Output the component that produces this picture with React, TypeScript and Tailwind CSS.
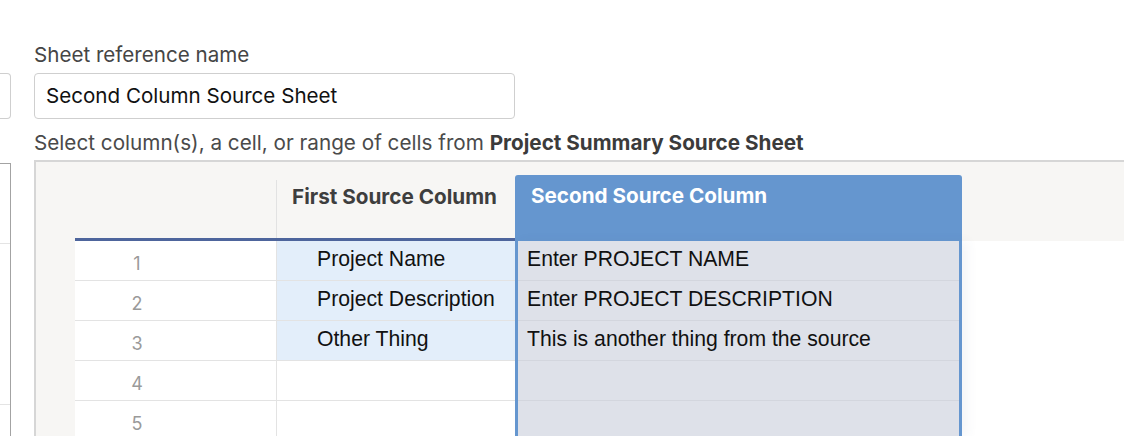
import React from 'react';

const rows = [
  { n: 1, label: 'Project Name', value: 'Enter PROJECT NAME' },
  { n: 2, label: 'Project Description', value: 'Enter PROJECT DESCRIPTION' },
  { n: 3, label: 'Other Thing', value: 'This is another thing from the source' },
  { n: 4, label: '', value: '' },
  { n: 5, label: '', value: '' },
];

const inter = "font-['Inter',sans-serif]";
const cellFont = "font-['Liberation_Sans',Arial,sans-serif]";

export default function App() {
  return (
    <div className="flex h-[436px] w-[1124px] overflow-hidden bg-white">
      {/* clipped panel on the left */}
      <div className="flex w-[11px] shrink-0 flex-col">
        <div className="mt-[73px] h-[46px] shrink-0 rounded-r-[4px] border-y border-r border-[#cfcfcf]" />
        <div className="mt-[44px] min-h-0 flex-1 border-t border-r border-[#a3a3a3]">
          <div className="h-[80px] border-b border-[#e4e4e4]" />
          <div className="h-[161px] border-b border-[#e4e4e4]" />
        </div>
      </div>

      <div className={`ml-[23px] flex min-w-0 flex-1 flex-col pt-[43px] ${inter}`}>
        <label className="shrink-0 text-[20.6px] leading-[24px] text-[#454545]">Sheet reference name</label>
        <div className="mt-[6px] flex h-[46px] w-[481px] shrink-0 items-center rounded-[4px] border border-[#cfcfcf] px-[11px] text-[20.6px] text-[#111]">
          Second Column Source Sheet
        </div>
        <p className="mt-[12px] shrink-0 text-[20.7px] leading-[24px] text-[#4a4a4a]">
          Select column(s), a cell, or range of cells from{' '}
          <span className="font-bold text-[#3b3b3b]">Project Summary Source Sheet</span>
        </p>

        <div className="mt-[5px] flex min-h-0 flex-1 border-t-2 border-l-2 border-[#d6d6d6] bg-[#f7f6f4]">
          {/* gutter */}
          <div className="w-[39px] shrink-0" />

          {/* row numbers */}
          <div className="flex w-[201px] shrink-0 flex-col">
            <div className="h-[79px] shrink-0 border-b-[3px] border-[#4e659c]" />
            {rows.map((r) => (
              <div
                key={r.n}
                className="flex h-[40px] shrink-0 items-center border-b border-[#e3e3e3] bg-white pt-[5px]"
              >
                <span className="w-[124px] text-center text-[18px] text-[#9a9a9a]">{r.n}</span>
              </div>
            ))}
          </div>

          {/* first source column */}
          <div className="flex w-[239px] shrink-0 flex-col">
            <div className="flex h-[79px] shrink-0 border-b-[3px] border-[#4e659c]">
              <div className="mt-[18px] flex-1 border-l border-[#e2e2e2] pl-[15px] pt-[1px]">
                <span className="text-[20.7px] font-bold text-[#3e3e3e]">First Source Column</span>
              </div>
            </div>
            {rows.map((r) => (
              <div
                key={r.n}
                className={`flex h-[40px] shrink-0 items-center border-b border-l border-[#e3e3e3] pb-[4px] pl-[40px] text-[21.2px] text-[#111] ${cellFont} ${
                  r.label ? 'bg-[#e3eefa]' : 'bg-white'
                }`}
              >
                {r.label}
              </div>
            ))}
          </div>

          {/* second source column (selected) */}
          <div className="relative z-10 flex w-[447px] shrink-0 flex-col">
            <div className="mt-[13px] h-[66px] shrink-0 rounded-t-[3px] bg-[#6596cf] pl-[16px] pt-[5px]">
              <span className="text-[20.7px] font-bold text-white">Second Source Column</span>
            </div>
            <div className="min-h-0 flex-1 border-x-[3px] border-[#6596cf] bg-[#dee1e9] shadow-[6px_0_10px_rgba(60,80,120,0.06)]">
              {rows.map((r) => (
                <div
                  key={r.n}
                  className={`flex h-[40px] items-center border-b border-[#d3d6de] pb-[4px] pl-[9px] text-[21.2px] text-[#111] ${cellFont}`}
                >
                  {r.value}
                </div>
              ))}
            </div>
          </div>

          {/* remaining sheet area */}
          <div className="flex flex-1 flex-col">
            <div className="h-[79px] shrink-0" />
            <div className="flex-1 bg-white" />
          </div>
        </div>
      </div>
    </div>
  );
}
